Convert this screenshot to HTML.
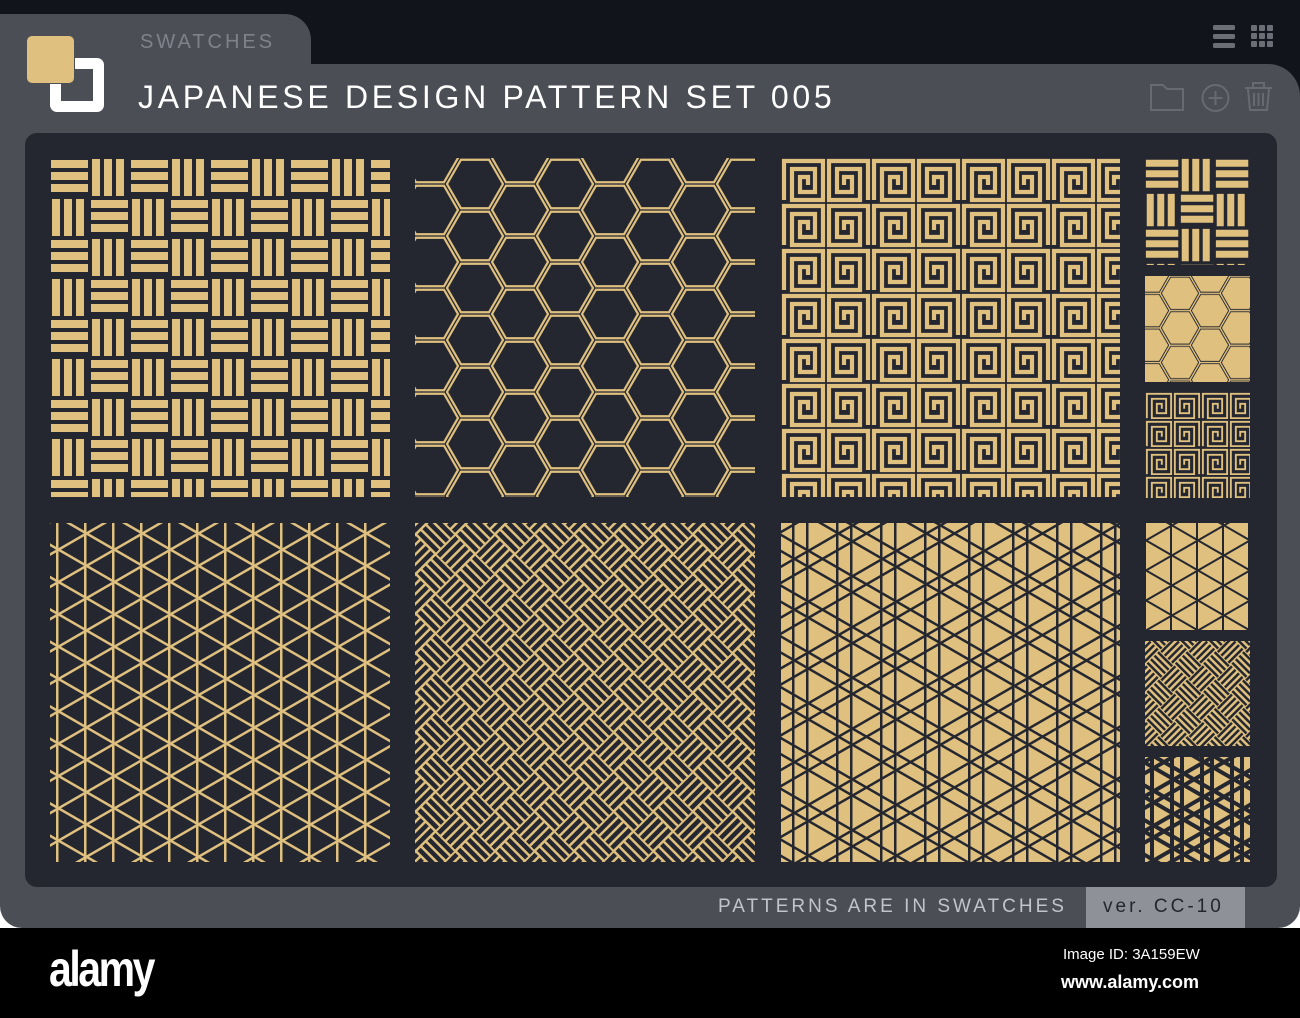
<!DOCTYPE html>
<html><head><meta charset="utf-8"><style>
*{margin:0;padding:0;box-sizing:border-box}
body{width:1300px;height:1018px;background:#000;position:relative;overflow:hidden;font-family:"Liberation Sans",sans-serif}
.top{position:absolute;left:0;top:0;width:1300px;height:900px;background:#12141b}
.white{position:absolute;left:0;top:880px;width:1300px;height:48px;background:#fff}
.tab{position:absolute;left:0;top:14px;width:311px;height:100px;background:#4c4e56;border-radius:0 26px 0 0}
.panel{position:absolute;left:0;top:64px;width:1300px;height:864px;background:#4c4e56;border-radius:0 32px 22px 22px}
.inner{position:absolute;left:25px;top:133px;width:1252px;height:754px;background:#252730;border-radius:12px}
.t{position:absolute;white-space:nowrap}
</style></head><body>
<div class="top"></div><div class="white"></div>
<div class="tab"></div><div class="panel"></div><div class="inner"></div>
<div style="position:absolute;left:50px;top:58px;width:54px;height:54px;border:11px solid #fff;border-radius:7px"></div>
<div style="position:absolute;left:26px;top:35px;width:49px;height:49px;background:#dfc07e;border-radius:6px;border:1px solid #4c4e56"></div>
<div class="t" style="left:140px;top:31px;font-size:20px;letter-spacing:3px;color:#80828b">SWATCHES</div>
<div class="t" style="left:138px;top:79px;font-size:32px;letter-spacing:3.7px;color:#fff">JAPANESE DESIGN PATTERN SET 005</div>
<div class="t" style="left:718px;top:896px;font-size:19px;letter-spacing:3px;color:#c2c4ca">PATTERNS ARE IN SWATCHES</div>
<div style="position:absolute;left:1086px;top:887px;width:159px;height:41px;background:#8f9199"></div>
<div class="t" style="left:1103px;top:896px;font-size:19px;letter-spacing:3px;color:#24262d">ver. CC-10</div>
<div class="t" style="left:49px;top:940px;font-size:50px;font-weight:bold;color:#fff;letter-spacing:-3px;transform:scaleX(0.82);transform-origin:left">alamy</div>
<div class="t" style="left:1063px;top:946px;font-size:15px;color:#fff">Image ID: 3A159EW</div>
<div class="t" style="left:1061px;top:972px;font-size:18px;font-weight:bold;color:#fff">www.alamy.com</div>
<svg width="1300" height="1018" style="position:absolute;left:0;top:0">
<defs>
<g id="bwg">
<rect width="80" height="80" fill="#252730"/>
<g fill="#dfc07e">
<rect x="1" y="2" width="37" height="8"/><rect x="1" y="14" width="37" height="8"/><rect x="1" y="26" width="37" height="8"/>
<rect x="42" y="1" width="8" height="37"/><rect x="54" y="1" width="8" height="37"/><rect x="66" y="1" width="8" height="37"/>
<rect x="41" y="42" width="37" height="8"/><rect x="41" y="54" width="37" height="8"/><rect x="41" y="66" width="37" height="8"/>
<rect x="2" y="41" width="8" height="37"/><rect x="14" y="41" width="8" height="37"/><rect x="26" y="41" width="8" height="37"/>
</g></g>
<pattern id="bw" width="80" height="80" patternUnits="userSpaceOnUse" x="50" y="158"><use href="#bwg"/></pattern>
<pattern id="bws" width="70" height="70" patternUnits="userSpaceOnUse" x="1145" y="158"><use href="#bwg" transform="scale(0.875)"/></pattern>
<polygon id="hx" points="-28,0 -14,-24.25 14,-24.25 28,0 14,24.25 -14,24.25"/>
<pattern id="hex" width="90" height="52" patternUnits="userSpaceOnUse" x="430" y="158">
<rect width="90" height="52" fill="#252730"/>
<g fill="none" stroke="#dfc07e" stroke-width="2.2">
<use href="#hx"/><use href="#hx" x="90"/><use href="#hx" y="52"/><use href="#hx" x="90" y="52"/><use href="#hx" x="45" y="26"/>
</g></pattern>
<pattern id="hexs" width="60" height="34.6" patternUnits="userSpaceOnUse" x="1150" y="276">
<rect width="60" height="34.6" fill="#dfc07e"/>
<g fill="none" stroke="#252730" stroke-width="1.4" transform="scale(0.6667)">
<use href="#hx"/><use href="#hx" x="90"/><use href="#hx" y="52"/><use href="#hx" x="90" y="52"/><use href="#hx" x="45" y="26"/>
</g></pattern>
<path id="sp" d="M3 42 V3 H42 V42 H11 V11 H34 V34 H19 V19 H27 V27"/>
<pattern id="gk" width="90" height="45" patternUnits="userSpaceOnUse" x="781" y="158">
<rect width="90" height="45" fill="#252730"/>
<g fill="none" stroke="#dfc07e" stroke-width="4.2">
<use href="#sp"/><use href="#sp" transform="translate(90,0) scale(-1,1)"/>
</g></pattern>
<pattern id="gks" width="56" height="28" patternUnits="userSpaceOnUse" x="1145" y="392">
<rect width="56" height="28" fill="#252730"/>
<g fill="none" stroke="#dfc07e" stroke-width="3" transform="scale(0.622)">
<use href="#sp"/><use href="#sp" transform="translate(90,0) scale(-1,1)"/>
</g></pattern>
<pattern id="l0" width="28" height="20" patternUnits="userSpaceOnUse"><rect x="0" width="2.5" height="20" fill="#dfc07e"/></pattern>
<pattern id="l60" width="28" height="20" patternUnits="userSpaceOnUse" patternTransform="rotate(60)"><rect x="0" width="2.5" height="20" fill="#dfc07e"/></pattern>
<pattern id="l120" width="28" height="20" patternUnits="userSpaceOnUse" patternTransform="rotate(-60)"><rect x="0" width="2.5" height="20" fill="#dfc07e"/></pattern>
<pattern id="d0" width="26" height="20" patternUnits="userSpaceOnUse"><rect x="0" width="2" height="20" fill="#252730"/></pattern>
<pattern id="d60" width="26" height="20" patternUnits="userSpaceOnUse" patternTransform="rotate(60)"><rect x="0" width="2" height="20" fill="#252730"/></pattern>
<pattern id="d120" width="26" height="20" patternUnits="userSpaceOnUse" patternTransform="rotate(-60)"><rect x="0" width="2" height="20" fill="#252730"/></pattern>
<pattern id="wv" width="56" height="56" patternUnits="userSpaceOnUse" patternTransform="rotate(45)">
<rect width="56" height="56" fill="#dfc07e"/>
<g fill="#252730">
<rect x="1" y="1" width="26" height="4.5"/><rect x="1" y="8" width="26" height="4.5"/><rect x="1" y="15" width="26" height="4.5"/><rect x="1" y="22" width="26" height="4.5"/>
<rect x="29" y="29" width="26" height="4.5"/><rect x="29" y="36" width="26" height="4.5"/><rect x="29" y="43" width="26" height="4.5"/><rect x="29" y="50" width="26" height="4.5"/>
<rect x="29" y="1" width="4.5" height="26"/><rect x="36" y="1" width="4.5" height="26"/><rect x="43" y="1" width="4.5" height="26"/><rect x="50" y="1" width="4.5" height="26"/>
<rect x="1" y="29" width="4.5" height="26"/><rect x="8" y="29" width="4.5" height="26"/><rect x="15" y="29" width="4.5" height="26"/><rect x="22" y="29" width="4.5" height="26"/>
</g></pattern>
<pattern id="wvs" width="40" height="40" patternUnits="userSpaceOnUse" patternTransform="rotate(45)">
<rect width="40" height="40" fill="#dfc07e"/>
<g fill="#252730">
<rect x="0" y="1" width="20" height="2.5"/><rect x="0" y="6" width="20" height="2.5"/><rect x="0" y="11" width="20" height="2.5"/><rect x="0" y="16" width="20" height="2.5"/>
<rect x="20" y="21" width="20" height="2.5"/><rect x="20" y="26" width="20" height="2.5"/><rect x="20" y="31" width="20" height="2.5"/><rect x="20" y="36" width="20" height="2.5"/>
<rect x="21" y="0" width="2.5" height="20"/><rect x="26" y="0" width="2.5" height="20"/><rect x="31" y="0" width="2.5" height="20"/><rect x="36" y="0" width="2.5" height="20"/>
<rect x="1" y="20" width="2.5" height="20"/><rect x="6" y="20" width="2.5" height="20"/><rect x="11" y="20" width="2.5" height="20"/><rect x="16" y="20" width="2.5" height="20"/>
</g></pattern>
<pattern id="y0" width="44" height="20" patternUnits="userSpaceOnUse"><rect x="0" width="2.5" height="20" fill="#252730"/><rect x="14" width="2.5" height="20" fill="#252730"/></pattern>
<pattern id="y60" width="44" height="20" patternUnits="userSpaceOnUse" patternTransform="rotate(60)"><rect x="0" width="2.5" height="20" fill="#252730"/><rect x="14" width="2.5" height="20" fill="#252730"/></pattern>
<pattern id="y120" width="44" height="20" patternUnits="userSpaceOnUse" patternTransform="rotate(-60)"><rect x="0" width="2.5" height="20" fill="#252730"/><rect x="14" width="2.5" height="20" fill="#252730"/></pattern>
<pattern id="ys0" width="30" height="20" patternUnits="userSpaceOnUse"><rect x="0" width="4" height="20" fill="#252730"/><rect x="10" width="4" height="20" fill="#252730"/></pattern>
<pattern id="ys60" width="30" height="20" patternUnits="userSpaceOnUse" patternTransform="rotate(60)"><rect x="0" width="4" height="20" fill="#252730"/><rect x="10" width="4" height="20" fill="#252730"/></pattern>
<pattern id="ys120" width="30" height="20" patternUnits="userSpaceOnUse" patternTransform="rotate(-60)"><rect x="0" width="4" height="20" fill="#252730"/><rect x="10" width="4" height="20" fill="#252730"/></pattern>
</defs>
<!-- row 1 -->
<rect x="50" y="158" width="340" height="339" fill="url(#bw)"/>
<rect x="415" y="158" width="340" height="339" fill="url(#hex)"/>
<rect x="781" y="158" width="339" height="339" fill="url(#gk)"/>
<rect x="1145" y="158" width="105" height="107" fill="url(#bws)"/>
<rect x="1145" y="276" width="105" height="106" fill="url(#hexs)"/>
<rect x="1145" y="392" width="105" height="106" fill="url(#gks)"/>
<!-- row 2 -->
<rect x="50" y="523" width="340" height="339" fill="#252730"/>
<rect x="50" y="523" width="340" height="339" fill="url(#l0)"/>
<rect x="50" y="523" width="340" height="339" fill="url(#l60)"/>
<rect x="50" y="523" width="340" height="339" fill="url(#l120)"/>
<rect x="415" y="523" width="340" height="339" fill="url(#wv)"/>
<rect x="781" y="523" width="339" height="339" fill="#dfc07e"/>
<rect x="781" y="523" width="339" height="339" fill="url(#y0)"/>
<rect x="781" y="523" width="339" height="339" fill="url(#y60)"/>
<rect x="781" y="523" width="339" height="339" fill="url(#y120)"/>
<rect x="1145" y="523" width="105" height="107" fill="#dfc07e"/>
<rect x="1145" y="523" width="105" height="107" fill="url(#d0)"/>
<rect x="1145" y="523" width="105" height="107" fill="url(#d60)"/>
<rect x="1145" y="523" width="105" height="107" fill="url(#d120)"/>
<rect x="1145" y="641" width="105" height="105" fill="url(#wvs)"/>
<rect x="1145" y="757" width="105" height="105" fill="#dfc07e"/>
<rect x="1145" y="757" width="105" height="105" fill="url(#ys0)"/>
<rect x="1145" y="757" width="105" height="105" fill="url(#ys60)"/>
<rect x="1145" y="757" width="105" height="105" fill="url(#ys120)"/>
<!-- top right icons -->
<g fill="#6c6e77">
<rect x="1213" y="25" width="22" height="5" rx="1.5"/><rect x="1213" y="34" width="22" height="5" rx="1.5"/><rect x="1213" y="43" width="22" height="5" rx="1.5"/>
<rect x="1251" y="25" width="6" height="6" rx="1"/><rect x="1259" y="25" width="6" height="6" rx="1"/><rect x="1267" y="25" width="6" height="6" rx="1"/>
<rect x="1251" y="33" width="6" height="6" rx="1"/><rect x="1259" y="33" width="6" height="6" rx="1"/><rect x="1267" y="33" width="6" height="6" rx="1"/>
<rect x="1251" y="41" width="6" height="6" rx="1"/><rect x="1259" y="41" width="6" height="6" rx="1"/><rect x="1267" y="41" width="6" height="6" rx="1"/>
</g>
<g fill="none" stroke="#686a72" stroke-width="2">
<path d="M1151 85 H1163 L1167 89 H1183 V110 H1151 Z"/>
<circle cx="1215.5" cy="98" r="13"/>
<path d="M1215.5 91 V105 M1208.5 98 H1222.5"/>
<path d="M1245 88 H1272 M1253 88 V83 H1264 V88 M1248 89 L1250 110 H1267 L1269 89 M1254 93 V106 M1258.5 93 V106 M1263 93 V106"/>
</g>
</svg>
</body></html>
